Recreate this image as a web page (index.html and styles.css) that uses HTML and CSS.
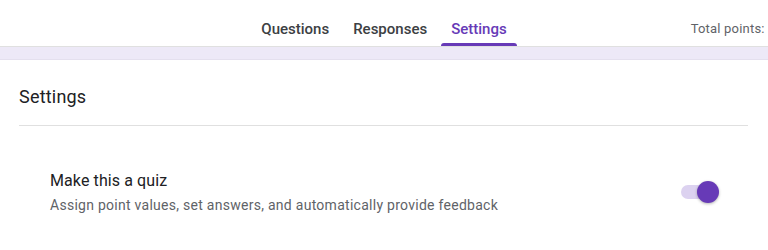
FILE: index.html
```html
<!DOCTYPE html>
<html>
<head>
  <title>Settings</title>
  <link rel="stylesheet" href="styles.css">
</head>
<body>
  <div class="header">
    <div class="header-side"></div>
    <nav class="tabs">
      <div class="tab">Questions</div>
      <div class="tab">Responses</div>
      <div class="tab active">Settings</div>
    </nav>
    <div class="header-side points">
      <span>Total points: 0</span>
    </div>
  </div>
  <div class="band"></div>

  <div class="card">
    <div class="card-header">
      <h2>Settings</h2>
    </div>
    <div class="setting-row">
      <div class="setting-text">
        <div class="setting-title">Make this a quiz</div>
        <div class="setting-desc">Assign point values, set answers, and automatically provide feedback</div>
      </div>
      <div class="toggle on">
        <div class="toggle-track"></div>
        <div class="toggle-thumb"></div>
      </div>
    </div>
  </div>
</body>
</html>
```

FILE: styles.css
```css
:root {
  --gf-purple: #673ab7;
  --gf-lavender: #ede9f7;
  --gf-border: #e0e0e0;
  --gf-text: #202124;
  --gf-text-secondary: #5f6368;
  --gf-font: Roboto, "Noto Sans", Arial, sans-serif;
}

* {
  margin: 0;
  padding: 0;
  box-sizing: border-box;
}

body {
  width: 768px;
  overflow: hidden;
  font-family: var(--gf-font);
  background: #ffffff;
  color: var(--gf-text);
  -webkit-font-smoothing: antialiased;
}

.header {
  display: grid;
  grid-template-columns: 1fr auto 1fr;
  height: 47px;
  border-bottom: 1px solid var(--gf-border);
}

.tabs {
  display: flex;
  gap: 4px;
}

.tab {
  position: relative;
  padding: 0 10px;
  line-height: 58px;
  height: 46px;
  font-size: 15px;
  font-weight: 500;
  color: #3c4043;
}

.tab.active {
  color: var(--gf-purple);
}

.tab.active::after {
  content: "";
  position: absolute;
  left: 0;
  right: 0;
  bottom: 0;
  height: 3px;
  background: var(--gf-purple);
  border-radius: 3px 3px 0 0;
}

.points {
  display: flex;
  justify-content: flex-start;
  align-items: center;
  padding-top: 11px;
  overflow: hidden;
}

.points span {
  margin-left: 174px;
  font-size: 13px;
  letter-spacing: 0.2px;
  color: var(--gf-text-secondary);
  white-space: nowrap;
}

.band {
  height: 13px;
  background: var(--gf-lavender);
  border-bottom: 1px solid #e4e0ee;
}

.card {
  padding: 0 20px 0 19px;
}

.card-header {
  padding: 26px 0 17px;
  border-bottom: 1px solid var(--gf-border);
}

.card-header h2 {
  font-size: 18px;
  font-weight: 400;
  line-height: 22px;
  letter-spacing: 0.2px;
  color: var(--gf-text);
}

.setting-row {
  display: flex;
  align-items: center;
  justify-content: space-between;
  padding: 45px 29px 0 31px;
}

.setting-title {
  font-size: 16px;
  line-height: 20px;
  letter-spacing: 0.1px;
  color: var(--gf-text);
}

.setting-desc {
  margin-top: 4px;
  font-size: 14px;
  line-height: 20px;
  letter-spacing: 0.27px;
  color: var(--gf-text-secondary);
}

.toggle {
  position: relative;
  width: 38px;
  height: 22px;
  margin-top: -2px;
}

.toggle-track {
  position: absolute;
  left: 0;
  top: 4px;
  width: 34px;
  height: 14px;
  border-radius: 7px;
  background: #dcd2f0;
}

.toggle-thumb {
  position: absolute;
  right: 0;
  top: 0;
  width: 22px;
  height: 22px;
  border-radius: 50%;
  background: var(--gf-purple);
  box-shadow: 0 1px 3px rgba(0, 0, 0, 0.3);
}
```
